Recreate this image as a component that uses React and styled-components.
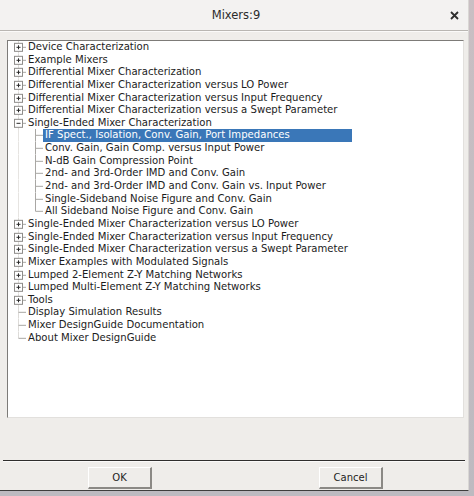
import React from "react";
import styled, { createGlobalStyle } from "styled-components";

const GlobalStyle = createGlobalStyle`
  html, body {
    margin: 0;
    padding: 0;
    width: 474px;
    height: 496px;
    overflow: hidden;
    background: #c4c0c4;
  }
`;

const ROW_H = 12.65;

const tree = [
  { label: "Device Characterization", kind: "closed" },
  { label: "Example Mixers", kind: "closed" },
  { label: "Differential Mixer Characterization", kind: "closed" },
  { label: "Differential Mixer Characterization versus LO Power", kind: "closed" },
  { label: "Differential Mixer Characterization versus Input Frequency", kind: "closed" },
  { label: "Differential Mixer Characterization versus a Swept Parameter", kind: "closed" },
  {
    label: "Single-Ended Mixer Characterization",
    kind: "open",
    children: [
      "IF Spect., Isolation, Conv. Gain, Port Impedances",
      "Conv. Gain, Gain Comp. versus Input Power",
      "N-dB Gain Compression Point",
      "2nd- and 3rd-Order IMD and Conv. Gain",
      "2nd- and 3rd-Order IMD and Conv. Gain vs. Input Power",
      "Single-Sideband Noise Figure and Conv. Gain",
      "All Sideband Noise Figure and Conv. Gain",
    ],
  },
  { label: "Single-Ended Mixer Characterization versus LO Power", kind: "closed" },
  { label: "Single-Ended Mixer Characterization versus Input Frequency", kind: "closed" },
  { label: "Single-Ended Mixer Characterization versus a Swept Parameter", kind: "closed" },
  { label: "Mixer Examples with Modulated Signals", kind: "closed" },
  { label: "Lumped 2-Element Z-Y Matching Networks", kind: "closed" },
  { label: "Lumped Multi-Element Z-Y Matching Networks", kind: "closed" },
  { label: "Tools", kind: "closed" },
  { label: "Display Simulation Results", kind: "leaf" },
  { label: "Mixer DesignGuide Documentation", kind: "leaf" },
  { label: "About Mixer DesignGuide", kind: "leaf" },
];

const LINE = "#a9a7a4";

// expander / connector drawing for a top level row
const RootGutter = ({ kind, last }) => {
  const mid = ROW_H / 2;
  return (
    <svg width="18" height={ROW_H} style={{ flex: "none", display: "block" }}>
      <line x1="10.5" y1="0" x2="10.5" y2={last ? mid : ROW_H} stroke="#dddbd8" />
      <line x1="10.5" y1={mid} x2="18" y2={mid} stroke={LINE} />
      {kind !== "leaf" && (
        <g>
          <rect x="6.5" y={mid - 4} width="8" height="8" fill="#fff" stroke="#8e8c89" />
          <line x1="8.5" y1={mid} x2="12.5" y2={mid} stroke="#2a2a2a" />
          {kind === "closed" && (
            <line x1="10.5" y1={mid - 2} x2="10.5" y2={mid + 2} stroke="#2a2a2a" />
          )}
        </g>
      )}
    </svg>
  );
};

const ChildGutter = ({ last }) => {
  const mid = ROW_H / 2;
  return (
    <svg width="35" height={ROW_H} style={{ flex: "none", display: "block" }}>
      <line x1="10.5" y1="0" x2="10.5" y2={ROW_H} stroke="#e6e4e1" />
      <line x1="27.5" y1="0" x2="27.5" y2={last ? mid : ROW_H} stroke={LINE} />
      <line x1="27.5" y1={mid} x2="35" y2={mid} stroke={LINE} />
    </svg>
  );
};

const App = () => {
  return (
    <>
      <GlobalStyle />
      <Desktop>
        <Window>
          <TitleBar>
            <Title>Mixers:9</Title>
            <CloseButton>
              <svg width="9" height="9" viewBox="0 0 9 9">
                <path d="M1 1 L8 8 M8 1 L1 8" stroke="#2e2e2e" strokeWidth="1.8" />
              </svg>
            </CloseButton>
          </TitleBar>
          <Body>
            <TreePanel>
              {tree.map((node, i) => (
                <React.Fragment key={node.label}>
                  <Row>
                    <RootGutter kind={node.kind} last={i === tree.length - 1} />
                    <Label>{node.label}</Label>
                  </Row>
                  {node.children?.map((child, j) => (
                    <Row key={child}>
                      <ChildGutter last={j === node.children.length - 1} />
                      <Label selected={j === 0}>{child}</Label>
                    </Row>
                  ))}
                </React.Fragment>
              ))}
            </TreePanel>
            <Separator />
            <ButtonRow>
              <Button>OK</Button>
              <Button>Cancel</Button>
            </ButtonRow>
          </Body>
        </Window>
      </Desktop>
    </>
  );
};

export default App;

const Desktop = styled.div`
  width: 474px;
  height: 496px;
  background: linear-gradient(#c9bfc3, #bdbac0);
`;

const Window = styled.div`
  width: 469px;
  height: 491px;
  display: flex;
  flex-direction: column;
  background: #efedea;
  border-right: 1px solid #d9d7d4;
  border-bottom: 1px solid #3e3d3c;
  box-sizing: border-box;
`;

const TitleBar = styled.div`
  height: 31px;
  flex: none;
  display: flex;
  align-items: center;
  justify-content: center;
  position: relative;
  background: #f3f2f1;
  border-bottom: 1px solid #b9b6b2;
  box-sizing: border-box;
`;

const Title = styled.span`
  font-family: "DejaVu Sans", sans-serif;
  font-size: 11.5px;
  color: #2b2b2b;
  margin-left: 4px;
`;

const CloseButton = styled.div`
  position: absolute;
  right: 9px;
  top: 11px;
  width: 9px;
  height: 9px;
  display: flex;
`;

const Body = styled.div`
  flex: 1;
  display: flex;
  flex-direction: column;
  padding: 8px 3px 0 3px;
  border-top: 1px solid #fbfaf9;
`;

const TreePanel = styled.div`
  margin: 0 1px 0 4px;
  height: 378px;
  flex: none;
  background: #fff;
  border-top: 1px solid #7d7b78;
  border-left: 1px solid #7d7b78;
  border-right: 1px solid #e2e0dd;
  border-bottom: 1px solid #e2e0dd;
  box-sizing: border-box;
  padding-top: 0;
  overflow: hidden;
`;

const Row = styled.div`
  height: ${ROW_H}px;
  display: flex;
  align-items: stretch;
`;

const Label = styled.span`
  font-family: "DejaVu Sans", sans-serif;
  font-size: 10.1px;
  line-height: ${ROW_H}px;
  white-space: nowrap;
  padding: 0 ${(p) => (p.selected ? "62px" : "0")} 0 2px;
  color: ${(p) => (p.selected ? "#ffffff" : "#1c1c1c")};
  background: ${(p) => (p.selected ? "#3a77b8" : "transparent")};
`;

const Separator = styled.div`
  margin-top: 42px;
  height: 1px;
  background: #2f2e2d;
  border-bottom: 1px solid #fbfaf9;
`;

const ButtonRow = styled.div`
  display: flex;
  padding: 5px 0 0 85px;
  gap: 167px;
`;

const Button = styled.div`
  width: 64px;
  height: 22px;
  box-sizing: border-box;
  display: flex;
  align-items: center;
  justify-content: center;
  font-family: "DejaVu Sans", sans-serif;
  font-size: 10px;
  color: #1e1e1e;
  background: #efedea;
  border-top: 1px solid #ffffff;
  border-left: 1px solid #ffffff;
  border-right: 2px solid #8b8985;
  border-bottom: 2px solid #8b8985;
`;
